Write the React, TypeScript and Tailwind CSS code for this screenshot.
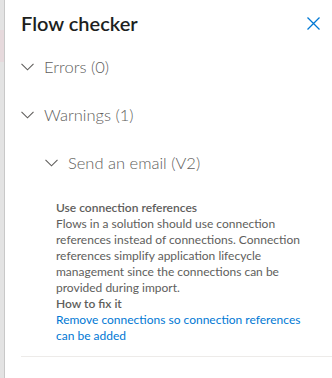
import React from "react";

const Chevron = () => (
  <svg width="13" height="8" viewBox="0 0 13 8">
    <path d="M0.5 0.8 L6.5 6.8 L12.5 0.8" fill="none" stroke="#605e5c" strokeWidth="1.1" />
  </svg>
);

export default function App() {
  return (
    <div
      className="flex w-[332px] h-[378px] bg-white overflow-hidden"
      style={{ fontFamily: 'Lato, "Open Sans", sans-serif' }}
    >
      <div className="w-[5px] shrink-0 bg-[#e3e3e3] border-r border-[#c8c8c8] flex flex-col">
        <div className="h-[30px]" />
        <div className="h-[32px] bg-[#e6d9dc]" />
      </div>
      <div className="flex-1 flex flex-col pl-[16px]">
        <div className="flex items-center justify-between h-[44px] pt-[2px] pr-[12px]">
          <div className="text-[20px] font-semibold text-[#201f1e]">Flow checker</div>
          <svg width="13" height="13" viewBox="0 0 13 13">
            <path d="M0.5 0.5 L12.5 12.5 M12.5 0.5 L0.5 12.5" stroke="#0078d4" strokeWidth="1.3" />
          </svg>
        </div>
        <div className="flex items-center h-[46px]">
          <Chevron />
          <span className="ml-[10px] text-[16.5px] font-light text-[#605e5c]">Errors (0)</span>
        </div>
        <div className="flex items-center h-[50px]">
          <Chevron />
          <span className="ml-[10px] text-[16.5px] font-light text-[#605e5c]">Warnings (1)</span>
        </div>
        <div className="flex items-center h-[46px] pl-[24px]">
          <Chevron />
          <span className="ml-[10px] text-[16.5px] font-light text-[#605e5c]">Send an email (V2)</span>
        </div>
        <div className="pl-[35px] pr-[20px] pt-[14px] pb-[12px] text-[12px] leading-[16px] text-[#605e5c]">
          <div className="font-semibold">Use connection references</div>
          <div>
            Flows in a solution should use connection references instead of connections. Connection
            references simplify application lifecycle management since the connections can be
            provided during import.
          </div>
          <div className="font-semibold">How to fix it</div>
          <div className="text-[#0078d4]">Remove connections so connection references can be added</div>
        </div>
        <div className="border-t border-[#edebe9]" />
      </div>
    </div>
  );
}
